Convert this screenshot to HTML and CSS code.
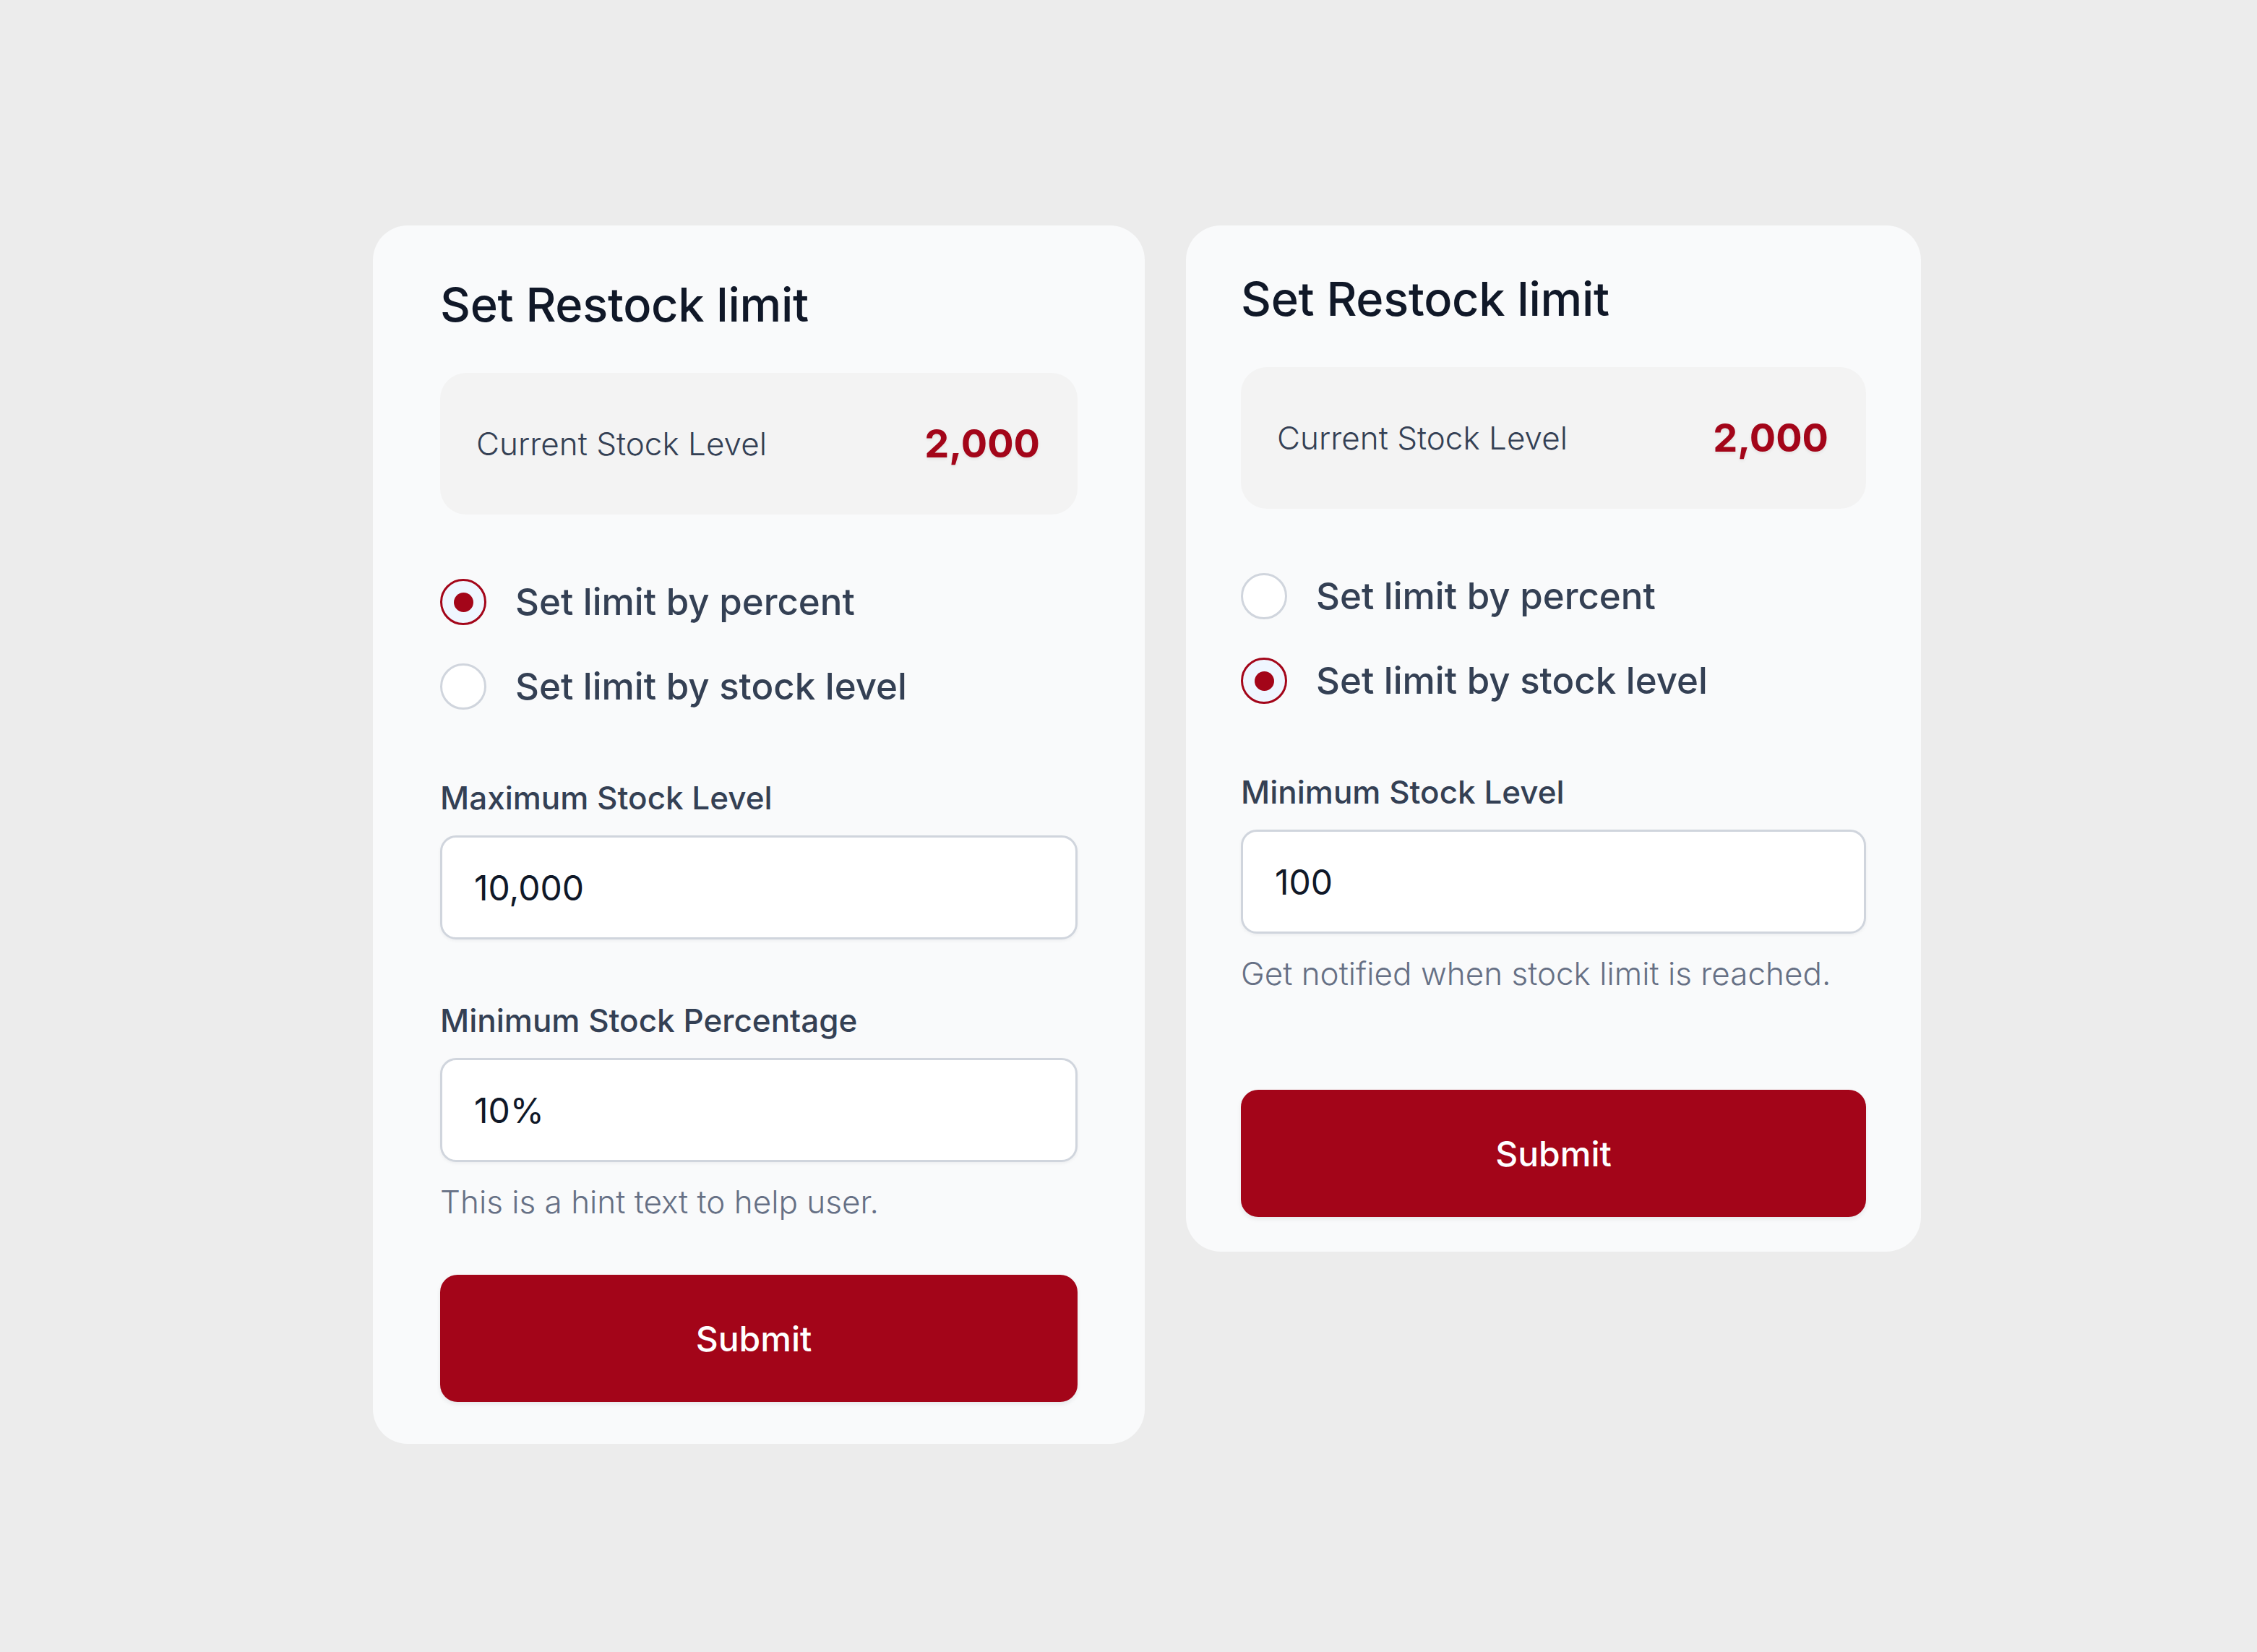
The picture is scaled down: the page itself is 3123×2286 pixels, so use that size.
FILE: index.html
```html
<!DOCTYPE html>
<html lang="en">
<head>
<meta charset="utf-8">
<title>Set Restock limit</title>
<link rel="stylesheet" href="styles.css">
</head>
<body>
<main class="stage">
  <section class="card card--a">
    <h2 class="title">Set Restock limit</h2>
    <div class="stat">
      <span class="stat-label">Current Stock Level</span>
      <span class="stat-value">2,000</span>
    </div>
    <div class="options">
      <div class="option"><span class="radio radio--on"></span><span class="option-label">Set limit by percent</span></div>
      <div class="option"><span class="radio"></span><span class="option-label">Set limit by stock level</span></div>
    </div>
    <div class="field">
      <label class="field-label">Maximum Stock Level</label>
      <input class="field-input" type="text" value="10,000">
    </div>
    <div class="field">
      <label class="field-label">Minimum Stock Percentage</label>
      <input class="field-input" type="text" value="10%">
      <p class="hint">This is a hint text to help user.</p>
    </div>
    <button class="submit" type="button">Submit</button>
  </section>

  <section class="card card--b">
    <h2 class="title">Set Restock limit</h2>
    <div class="stat">
      <span class="stat-label">Current Stock Level</span>
      <span class="stat-value">2,000</span>
    </div>
    <div class="options">
      <div class="option"><span class="radio"></span><span class="option-label">Set limit by percent</span></div>
      <div class="option"><span class="radio radio--on"></span><span class="option-label">Set limit by stock level</span></div>
    </div>
    <div class="field">
      <label class="field-label">Minimum Stock Level</label>
      <input class="field-input" type="text" value="100">
      <p class="hint">Get notified when stock limit is reached.</p>
    </div>
    <button class="submit" type="button">Submit</button>
  </section>
</main>
</body>
</html>
```

FILE: styles.css
```css
* { box-sizing: border-box; }

body {
  margin: 0;
  min-height: 100vh;
  background: #ececec;
  font-family: Inter, "Noto Sans", sans-serif;
}

.stage {
  display: flex;
  align-items: flex-start;
  gap: 57px;
  padding: 312px 0 0 516px;
}

.card {
  display: flex;
  flex-direction: column;
  background: #f9fafb;
  border-radius: 48px;
}

.card--a {
  width: 1068px;
  padding: 70px 93px 58px;
}

.card--b {
  width: 1017px;
  padding: 62px 76px 48px;
}

.title {
  margin: 0;
  font-size: 65px;
  line-height: 80px;
  font-weight: 500;
  color: #101828;
  letter-spacing: -0.3px;
}

.stat {
  margin-top: 54px;
  height: 196px;
  background: #f3f3f3;
  border-radius: 36px;
  display: flex;
  align-items: center;
  justify-content: space-between;
  padding: 0 52px 0 50px;
}

.stat-label {
  font-size: 44px;
  line-height: 53px;
  font-weight: 300;
  color: #344054;
}

.stat-value {
  font-size: 54px;
  line-height: 64px;
  font-weight: 700;
  color: #a30519;
  text-shadow: 0 2px 4px rgba(0, 0, 0, 0.08);
}

.options {
  margin-top: 89px;
  display: flex;
  flex-direction: column;
  gap: 53px;
}

.option {
  display: flex;
  align-items: center;
  gap: 40px;
  height: 64px;
}

.radio {
  flex: none;
  width: 64px;
  height: 64px;
  border-radius: 50%;
  border: 3px solid #d0d5dd;
  background: #fff;
  display: flex;
  align-items: center;
  justify-content: center;
}

.radio--on {
  border-color: #a30519;
  background: #eff6ff;
}

.radio--on::after {
  content: "";
  width: 27px;
  height: 27px;
  border-radius: 50%;
  background: #a30519;
}

.option-label {
  font-size: 51px;
  line-height: 64px;
  font-weight: 500;
  color: #344054;
}

.field {
  margin-top: 96px;
  display: flex;
  flex-direction: column;
}

.field + .field {
  margin-top: 86px;
}

.field-label {
  font-size: 44px;
  line-height: 53px;
  font-weight: 500;
  color: #344054;
}

.field-input {
  margin-top: 25px;
  height: 144px;
  width: 100%;
  border: 3px solid #d0d5dd;
  border-radius: 22px;
  background: #fff;
  padding: 0 44px;
  font-family: Inter, "Noto Sans", sans-serif;
  font-size: 48px;
  font-weight: 400;
  color: #101828;
  box-shadow: 0 2px 4px rgba(16, 24, 40, 0.05);
  outline: none;
}

.hint {
  margin: 29px 0 0;
  font-size: 44px;
  line-height: 53px;
  font-weight: 300;
  color: #667085;
}

.submit {
  margin-top: 74px;
  height: 176px;
  width: 100%;
  border: none;
  border-radius: 24px;
  background: #a30519;
  color: #fff;
  font-family: Inter, "Noto Sans", sans-serif;
  font-size: 48px;
  font-weight: 500;
  box-shadow: 0 3px 6px rgba(16, 24, 40, 0.08);
}

.card--a .submit {
  padding-right: 20px;
}

.card--b .submit {
  margin-top: 134px;
}
```
